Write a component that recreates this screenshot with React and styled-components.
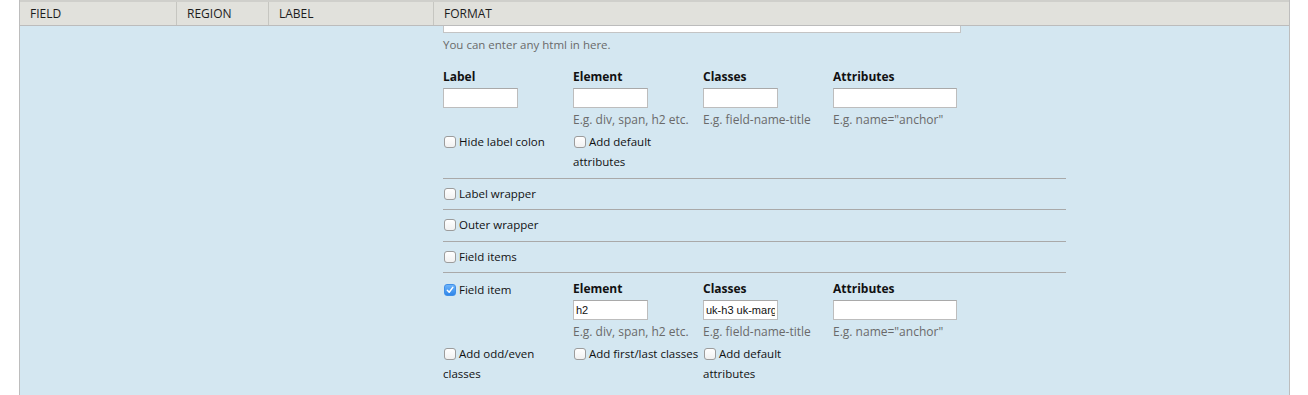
import React from "react";
import styled, { createGlobalStyle } from "styled-components";

const FONT = `"Open Sans", "DejaVu Sans", sans-serif`;

const Global = createGlobalStyle`
  html, body { margin: 0; padding: 0; background: #fff; }
  body { font-family: ${FONT}; color: #1a1a1a; }
  * { box-sizing: border-box; }
`;

const Table = styled.div`
  margin-left: 19px;
  width: 1271px;
  border-left: 1px solid #bdbdbd;
  border-right: 1px solid #bdbdbd;
  height: 395px;
  background: #d4e7f1;
  overflow: hidden;
`;

const Cols = `156px 92px 165px 1fr`;

const HeaderRow = styled.div`
  display: grid;
  grid-template-columns: ${Cols};
  height: 26px;
  background: #e1e1dc;
  border-top: 2px solid #cfcfcb;
  border-bottom: 1px solid #bcbcbc;
  position: relative;
  z-index: 2;
`;

const HeadCell = styled.div`
  padding-left: 10px;
  font-size: 12px;
  line-height: 23px;
  text-transform: uppercase;
  color: #1c1c1c;
  border-left: ${(p) => (p.$first ? "none" : "1px solid #c6c6c1")};
`;

const BodyRow = styled.div`
  display: grid;
  grid-template-columns: ${Cols};
`;

const EmptyCell = styled.div``;

const FormatCell = styled.div`
  grid-column: 4;
  padding-left: 10px;
  width: 633px;
`;

const TopInput = styled.div`
  width: 518px;
  height: 20px;
  margin-top: -13px;
  background: #fff;
  border: 1px solid #c4c4c4;
`;

const Desc = styled.div`
  font-size: ${(p) => p.$fs || 12}px;
  line-height: 16px;
  color: #6a6a6a;
  margin-top: ${(p) => p.$mt || 3}px;
  white-space: nowrap;
`;

const Section = styled.div`
  padding: ${(p) => p.$pt || 5}px 0 ${(p) => p.$pb || 5}px;
  border-bottom: ${(p) => (p.$last ? "none" : "1px solid #a9a9a9")};
`;

const FieldGrid = styled.div`
  display: grid;
  grid-template-columns: 130px 130px 130px 140px;
`;

const Col = styled.div`
  display: flex;
  flex-direction: column;
  align-items: flex-start;
`;

const Heading = styled.div`
  font-size: 12px;
  font-weight: 700;
  line-height: 18px;
  color: #111;
`;

const TextInput = styled.input`
  margin: 2px 0 0;
  width: ${(p) => p.$w || 75}px;
  height: 20px;
  background: #fff;
  border: 1px solid #bdbdbd;
  border-top-color: #a9a9a9;
  border-radius: 0;
  font-size: 11px;
  line-height: 18px;
  padding: 0 2px;
  color: #111;
  outline: none;
  font-family: "Liberation Sans", Arial, sans-serif;
`;

const CheckRow = styled.div`
  display: grid;
  grid-template-columns: 130px 130px 130px;
  margin-top: 4px;
`;

const CheckLabel = styled.div`
  font-size: 11.5px;
  line-height: 20px;
  color: #111;
  padding-right: ${(p) => p.$pr ?? 2}px;
`;

const Box = styled.span`
  display: inline-block;
  vertical-align: -2px;
  width: 12px;
  height: 12px;
  margin: 0 3px 0 1px;
  border-radius: 3px;
  border: 1px solid ${(p) => (p.$checked ? "#3f8fe8" : "#9c9c9c")};
  background: ${(p) =>
    p.$checked
      ? "linear-gradient(#6cb3fa, #2f86ea)"
      : "linear-gradient(#ffffff, #f1f1f1)"};
  position: relative;
  svg { position: absolute; left: 1px; top: 1px; }
`;

const Check = ({ checked, children, pr }) => (
  <CheckLabel $pr={pr}>
    <Box $checked={checked}>
      {checked && (
        <svg width="8" height="8" viewBox="0 0 8 8">
          <path d="M1.3 4.3 L3.2 6.2 L6.8 1.4" fill="none" stroke="#fff" strokeWidth="1.5" strokeLinecap="round" strokeLinejoin="round" />
        </svg>
      )}
    </Box>
    {children}
  </CheckLabel>
);

const FieldBlock = ({ title, value, desc, w }) => (
  <Col>
    <Heading>{title}</Heading>
    <TextInput $w={w} readOnly value={value || ""} />
    {desc && <Desc $mt={4}>{desc}</Desc>}
  </Col>
);

export default function App() {
  return (
    <>
      <Global />
      <Table>
        <HeaderRow>
          <HeadCell $first>Field</HeadCell>
          <HeadCell>Region</HeadCell>
          <HeadCell>Label</HeadCell>
          <HeadCell>Format</HeadCell>
        </HeaderRow>
        <BodyRow>
          <EmptyCell />
          <EmptyCell />
          <EmptyCell />
          <FormatCell>
            <TopInput />
            <Desc $mt={4} $fs={11.5}>You can enter any html in here.</Desc>
            <Section $pt={15} $pb={6}>
              <FieldGrid>
                <FieldBlock title="Label" />
                <FieldBlock title="Element" desc="E.g. div, span, h2 etc." />
                <FieldBlock title="Classes" desc="E.g. field-name-title" />
                <FieldBlock title="Attributes" desc={'E.g. name="anchor"'} w={124} />
              </FieldGrid>
              <CheckRow>
                <Check>Hide label colon</Check>
                <Check>Add default attributes</Check>
              </CheckRow>
            </Section>
            <Section>
              <Check>Label wrapper</Check>
            </Section>
            <Section $pb={6}>
              <Check>Outer wrapper</Check>
            </Section>
            <Section>
              <Check>Field items</Check>
            </Section>
            <Section $pt={7} $last>
              <FieldGrid>
                <Col>
                  <Check checked>Field item</Check>
                </Col>
                <FieldBlock title="Element" value="h2" desc="E.g. div, span, h2 etc." />
                <FieldBlock title="Classes" value="uk-h3 uk-margin" desc="E.g. field-name-title" />
                <FieldBlock title="Attributes" desc={'E.g. name="anchor"'} w={124} />
              </FieldGrid>
              <CheckRow>
                <Check>Add odd/even classes</Check>
                <Check pr={0}>Add first/last classes</Check>
                <Check>Add default attributes</Check>
              </CheckRow>
            </Section>
          </FormatCell>
        </BodyRow>
      </Table>
    </>
  );
}
